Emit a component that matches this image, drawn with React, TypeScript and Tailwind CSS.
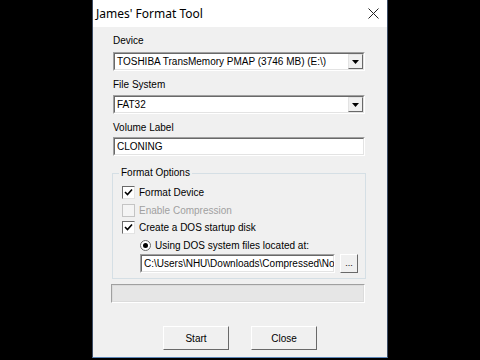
import React from 'react';

const font = { fontFamily: '"Liberation Sans", Arial, sans-serif' };

const Sunken: React.FC<{ className?: string; children?: React.ReactNode }> = ({ className = '', children }) => (
  <div className={`border border-t-[#a0a0a0] border-l-[#a0a0a0] border-b-white border-r-white ${className}`}>
    <div className="h-full border border-t-[#696969] border-l-[#696969] border-b-[#e3e3e3] border-r-[#e3e3e3] bg-white flex items-center">
      {children}
    </div>
  </div>
);

const DropButton = () => (
  <div className="h-[15px] w-[15px] bg-[#f0f0f0] border border-t-[#e3e3e3] border-l-[#e3e3e3] border-b-[#696969] border-r-[#696969] flex items-center justify-center">
    <svg width="7" height="4" viewBox="0 0 7 4">
      <path d="M0 0h7L3.5 4z" fill="#000" />
    </svg>
  </div>
);

const Combo: React.FC<{ value: string }> = ({ value }) => (
  <Sunken className="h-[19px] w-[252px]">
    <span className="flex-1 pl-[2px] text-[10px] text-black leading-none whitespace-nowrap">{value}</span>
    <DropButton />
  </Sunken>
);

const CheckBox: React.FC<{ checked?: boolean; disabled?: boolean; label: string }> = ({ checked, disabled, label }) => (
  <div className="flex items-center gap-[4px] h-[17.5px]">
    <div
      className={`h-[13px] w-[13px] border flex items-center justify-center ${
        disabled ? 'border-[#c4c4c4] bg-[#f4f4f4]' : 'border-t-[#696969] border-l-[#696969] border-b-[#e3e3e3] border-r-[#e3e3e3] bg-white'
      }`}
    >
      {checked && (
        <svg width="9" height="9" viewBox="0 0 9 9">
          <path d="M1 4l2.5 2.5L8 1.5" stroke="#000" strokeWidth="1.6" fill="none" />
        </svg>
      )}
    </div>
    <span className={`text-[10px] ${disabled ? 'text-[#a0a0a0]' : 'text-black'}`}>{label}</span>
  </div>
);

const Button: React.FC<{ label: string }> = ({ label }) => (
  <div className="h-[24px] w-[66px] bg-[#f0f0f0] border border-t-white border-l-white border-b-[#696969] border-r-[#696969] flex items-center justify-center text-[10px] text-black">
    {label}
  </div>
);

export default function App() {
  return (
    <div className="w-[480px] h-[360px] bg-black overflow-hidden" style={font}>
      <div className="ml-[92px] w-[296px] h-[358px] border-x border-b border-x-[#3c4d66] border-b-[#5c86b8] flex flex-col">
        {/* Title bar */}
        <div className="h-[27px] bg-white flex items-center justify-between pl-[3px] pr-[8px]">
          <span className="text-[12px] text-black" style={{ fontFamily: '"Noto Sans", "Open Sans", sans-serif' }}>
            James' Format Tool
          </span>
          <svg width="11" height="11" viewBox="0 0 11 11">
            <path d="M0.5 0.5l10 10M10.5 0.5l-10 10" stroke="#222" strokeWidth="1" />
          </svg>
        </div>

        {/* Body */}
        <div className="flex-1 bg-[#f0f0f0] pl-[20px] flex flex-col">
          <div className="mt-[7px] h-[13px] text-[10px] leading-[13px] text-black">Device</div>
          <div className="mt-[5px]">
            <Combo value="TOSHIBA TransMemory PMAP (3746 MB) (E:\)" />
          </div>

          <div className="mt-[7px] h-[13px] text-[10px] leading-[13px] text-black">File System</div>
          <div className="mt-[4px]">
            <Combo value="FAT32" />
          </div>

          <div className="mt-[7px] h-[13px] text-[10px] leading-[13px] text-black">Volume Label</div>
          <div className="mt-[3px]">
            <Sunken className="h-[19px] w-[252px]">
              <span className="pl-[2px] text-[10px] text-black">CLONING</span>
            </Sunken>
          </div>

          {/* Format Options group */}
          <div className="relative mt-[17px] -ml-[1px] w-[254px] h-[106px] border border-[#d5dfe5]">
            <span className="absolute -top-[8px] left-[6px] bg-[#f0f0f0] px-[2px] text-[10px] leading-[14px] text-black">
              Format Options
            </span>
            <div className="pl-[9px] pt-[10px] flex flex-col">
              <CheckBox checked label="Format Device" />
              <CheckBox disabled label="Enable Compression" />
              <CheckBox checked label="Create a DOS startup disk" />
              <div className="ml-[18px] flex items-center gap-[4px] h-[17px]">
                <div className="h-[11px] w-[11px] rounded-full bg-white border border-[#696969] flex items-center justify-center">
                  <div className="h-[5px] w-[5px] rounded-full bg-black" />
                </div>
                <span className="text-[10px] text-black">Using DOS system files located at:</span>
              </div>
              <div className="ml-[18px] flex items-center gap-[5px]">
                <Sunken className="h-[19px] w-[195px] overflow-hidden">
                  <span className="pl-[2px] text-[10px] text-black whitespace-nowrap">
                    C:\Users\NHU\Downloads\Compressed\Nor
                  </span>
                </Sunken>
                <div className="h-[19px] w-[18px] bg-[#f0f0f0] border border-t-white border-l-white border-b-[#696969] border-r-[#696969] flex items-end justify-center pb-[4px] text-[9px] leading-none text-black">
                  ...
                </div>
              </div>
            </div>
          </div>

          {/* Progress */}
          <div className="mt-[5px] -ml-[2px] w-[254px] h-[19px] border border-t-[#a0a0a0] border-l-[#a0a0a0] border-b-white border-r-white">
            <div className="h-full border border-[#dcdcdc] bg-[#e6e6e6]" />
          </div>

          {/* Buttons */}
          <div className="mt-[23px] ml-[50px] flex gap-[22px]">
            <Button label="Start" />
            <Button label="Close" />
          </div>
        </div>
      </div>
    </div>
  );
}
